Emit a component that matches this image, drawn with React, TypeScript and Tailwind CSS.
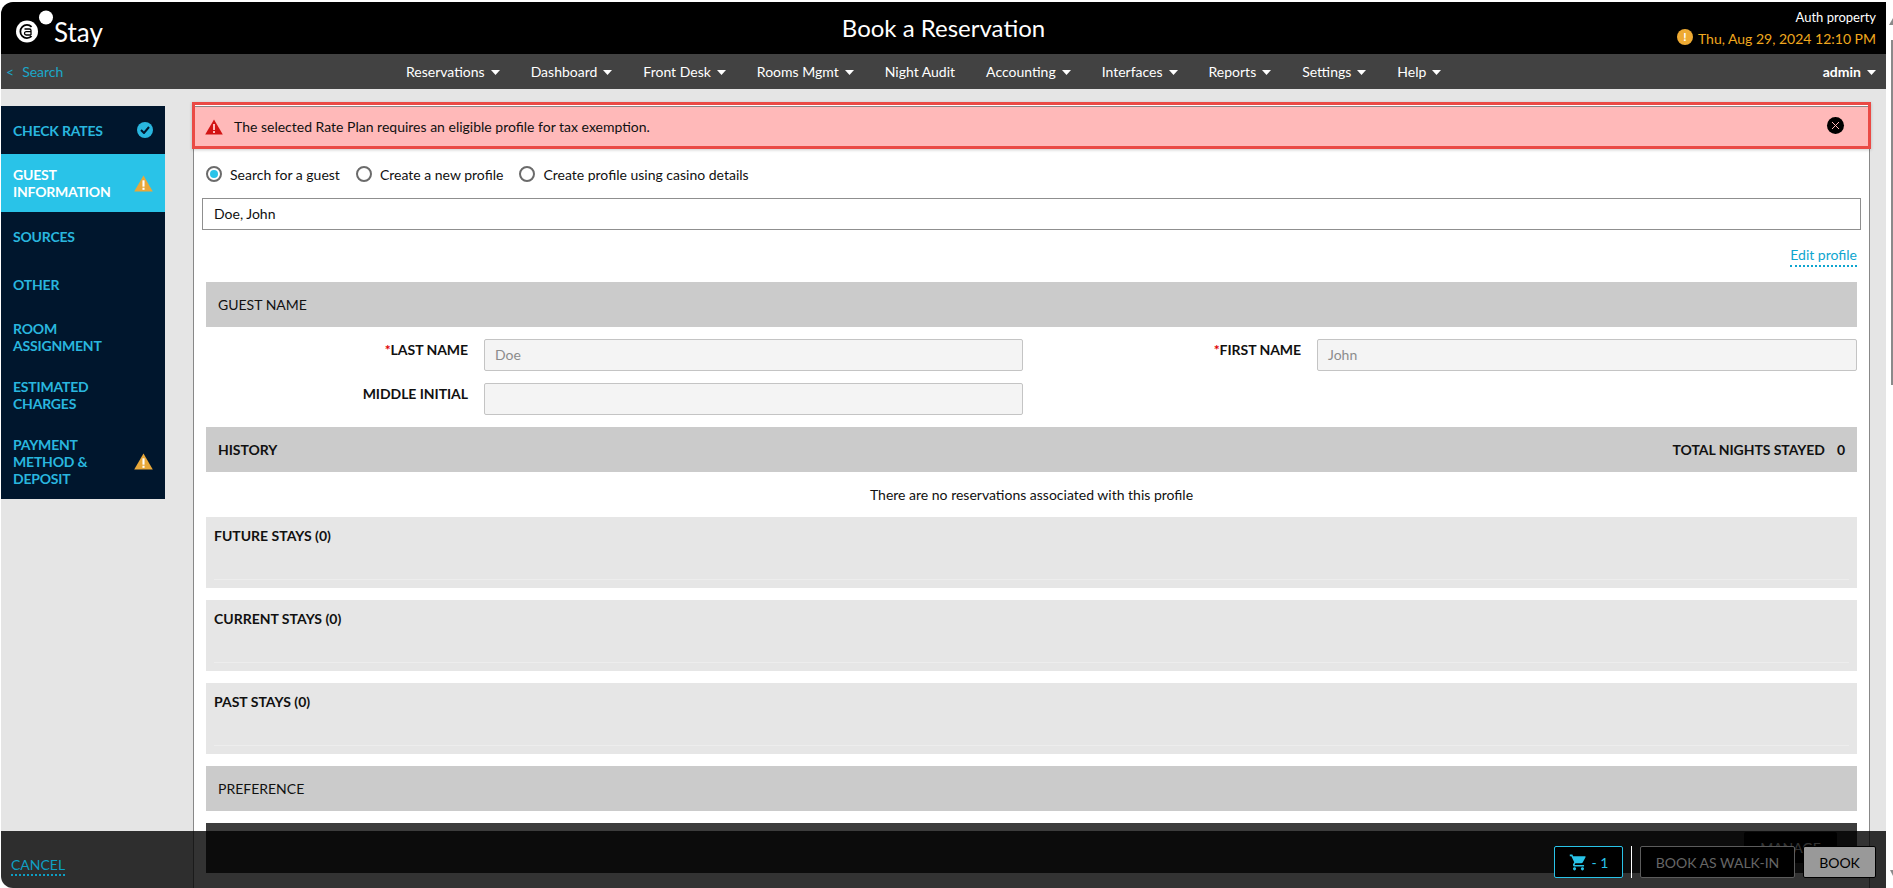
import { MdShoppingCart } from "react-icons/md";

const navItems = [
  { label: "Reservations", caret: true },
  { label: "Dashboard", caret: true },
  { label: "Front Desk", caret: true },
  { label: "Rooms Mgmt", caret: true },
  { label: "Night Audit", caret: false },
  { label: "Accounting", caret: true },
  { label: "Interfaces", caret: true },
  { label: "Reports", caret: true },
  { label: "Settings", caret: true },
  { label: "Help", caret: true },
];

const steps = [
  { lines: ["CHECK RATES"], h: "h-[48px]", status: "done" },
  { lines: ["GUEST", "INFORMATION"], h: "h-[58px]", status: "warn", active: true },
  { lines: ["SOURCES"], h: "h-[48px]" },
  { lines: ["OTHER"], h: "h-[48px]" },
  { lines: ["ROOM", "ASSIGNMENT"], h: "h-[58px]" },
  { lines: ["ESTIMATED", "CHARGES"], h: "h-[58px]" },
  { lines: ["PAYMENT", "METHOD &", "DEPOSIT"], h: "h-[75px]", status: "warn" },
];

function Caret() {
  return (
    <svg width="9" height="5" viewBox="0 0 9 5" className="mt-[2px]">
      <path d="M0 0h9L4.5 5z" fill="currentColor" />
    </svg>
  );
}

function Logo() {
  return (
    <svg width="40" height="40" viewBox="0 0 40 40" className="shrink-0">
      <circle cx="11" cy="25.5" r="11" fill="#fff" />
      <circle cx="30" cy="11.5" r="7" fill="#fff" />
      <path d="M15.6 20.8a6.6 6.6 0 1 0 0 9.4" fill="none" stroke="#000" strokeWidth="1.8" />
      <path
        d="M8.5 23h5a1.5 1.5 0 0 1 1.5 1.5V29M15 25.6h-4.8a1.7 1.7 0 0 0 0 3.4H15"
        fill="none"
        stroke="#000"
        strokeWidth="1.3"
      />
    </svg>
  );
}

function WarnIcon({ color, bang, w = 18, h = 16 }: { color: string; bang: string; w?: number; h?: number }) {
  return (
    <svg width={w} height={h} viewBox="0 0 18 16" className="shrink-0">
      <path d="M9 .5 17.8 15.5H.2z" fill={color} />
      <rect x="8" y="5" width="2" height="6" fill={bang} />
      <rect x="8" y="12" width="2" height="2" fill={bang} />
    </svg>
  );
}

function Radio({ label, checked }: { label: string; checked?: boolean }) {
  return (
    <div className="flex items-center gap-[8px]">
      <div className="flex h-[16px] w-[16px] items-center justify-center rounded-full border-2 border-[#6b6b6b] bg-white">
        {checked && <div className="h-[8px] w-[8px] rounded-full bg-[#29c3e8]" />}
      </div>
      <span>{label}</span>
    </div>
  );
}

function SectionBar({ children, className = "" }: { children: React.ReactNode; className?: string }) {
  return (
    <div className={`mx-[12px] flex h-[45px] items-center justify-between bg-[#cbcbcb] px-[12px] ${className}`}>
      {children}
    </div>
  );
}

function StayBox({ label }: { label: string }) {
  return (
    <div className="mx-[12px] mb-[12px] flex h-[71px] flex-col bg-[#e6e6e6] px-[8px] pt-[9px]">
      <div className="h-[20px] font-bold leading-[20px] text-[#111]">{label}</div>
      <div className="mt-auto mb-[8px] h-px bg-[#ededed]" />
    </div>
  );
}

function Field({ value }: { value: string }) {
  return (
    <div className="flex h-[32px] items-center rounded-[2px] border border-[#c4c4c4] bg-[#f4f4f4] px-[10px] pb-[2px] text-[#8c8c8c]">
      {value}
    </div>
  );
}

export default function App() {
  return (
    <div className="flex h-[888px] w-[1893px] overflow-hidden bg-white font-['Lato',sans-serif] text-[14px] text-[#111]">
      <div className="relative ml-px mt-[2px] flex w-[1885px] flex-col overflow-hidden rounded-tl-[12px] rounded-bl-[12px] bg-[#e5e5e5]">
        <header className="grid h-[52px] shrink-0 grid-cols-[1fr_auto_1fr] items-center bg-black text-white">
          <div className="flex items-start self-start pl-[15px] pt-[4px]">
            <Logo />
            <span className="ml-[-2px] mt-[10px] text-[26px] font-normal leading-[32px]">Stay</span>
          </div>
          <div className="text-[24px] leading-[30px]">Book a Reservation</div>
          <div className="flex flex-col items-end pr-[10px]">
            <div className="text-[13px] leading-[18px]">Auth property</div>
            <div className="mt-[3px] flex items-center gap-[5px] text-[14px] leading-[20px] text-[#f0a81e]">
              <div className="mb-[4px] flex h-[16px] w-[16px] items-center justify-center rounded-full bg-[#eeaa33] text-[12px] font-bold leading-none text-white">
                !
              </div>
              Thu, Aug 29, 2024 12:10 PM
            </div>
          </div>
        </header>

        <nav className="relative flex h-[35px] shrink-0 items-center bg-[#424242] text-[14px] text-white">
          <div className="absolute left-[5px] flex gap-[8px] text-[#1ba8c9]">
            <span>&lt;</span>
            <span>Search</span>
          </div>
          <div className="ml-[405px] flex items-center gap-[31px]">
            {navItems.map((n) => (
              <div key={n.label} className="flex items-center gap-[6px]">
                <span>{n.label}</span>
                {n.caret && <Caret />}
              </div>
            ))}
          </div>
          <div className="ml-auto flex items-center gap-[6px] pr-[10px] font-bold">
            <span>admin</span>
            <Caret />
          </div>
        </nav>

        <div className="flex min-h-0 flex-1 pt-[17px]">
          <aside className="h-[393px] w-[164px] shrink-0 bg-[#00162d]">
            {steps.map((s) => (
              <div
                key={s.lines[0]}
                className={`flex items-center justify-between pl-[12px] pr-[12px] font-bold leading-[17px] tracking-[-0.2px] ${s.h} ${
                  s.active ? "bg-[#29c3e8] text-white" : "text-[#29b6df]"
                }`}
              >
                <div>
                  {s.lines.map((l) => (
                    <div key={l}>{l}</div>
                  ))}
                </div>
                {s.status === "done" && (
                  <div className="flex h-[16px] w-[16px] items-center justify-center rounded-full bg-[#29b6df]">
                    <svg width="10" height="8" viewBox="0 0 10 8">
                      <path d="M1 4l3 3 5-6" fill="none" stroke="#00162d" strokeWidth="2" />
                    </svg>
                  </div>
                )}
                {s.status === "warn" && <WarnIcon color="#e8a83a" bang="#fff" w={19} h={17} />}
              </div>
            ))}
          </aside>

          <main className="ml-[28px] flex w-[1677px] flex-col border-x border-[#888] bg-white">
            <div className="relative z-10 -mx-[2px] -mt-[4px] flex h-[47px] flex-col border-[3px] border-[#ea4a45] bg-[#ffb9b9] shadow-[0_1px_3px_rgba(0,0,0,0.2)]">
              <div className="h-px shrink-0 bg-white" />
              <div className="h-px shrink-0 bg-[#888]" />
              <div className="flex flex-1 items-center pl-[10px] pr-[24px]">
                <WarnIcon color="#d21414" bang="#ffb9b9" />
                <span className="ml-[11px]">The selected Rate Plan requires an eligible profile for tax exemption.</span>
                <div className="ml-auto mb-[3px] flex h-[17px] w-[17px] items-center justify-center rounded-full bg-black">
                  <svg width="9" height="9" viewBox="0 0 9 9">
                    <path d="M1 1l7 7M8 1 1 8" stroke="#ffb9b9" strokeWidth="1" />
                  </svg>
                </div>
              </div>
            </div>

            <div className="mt-[15px] ml-[12px] flex h-[20px] items-center gap-[16px]">
              <Radio label="Search for a guest" checked />
              <Radio label="Create a new profile" />
              <Radio label="Create profile using casino details" />
            </div>

            <div className="mx-[8px] mt-[14px] flex h-[32px] shrink-0 items-center border border-[#8f8f8f] bg-white px-[11px] pb-[2px]">
              Doe, John
            </div>

            <div className="mr-[12px] mt-[15px] flex h-[22px] justify-end">
              <span className="border-b-2 border-dotted border-[#0ea5cf] leading-[20px] text-[#0ea5cf]">Edit profile</span>
            </div>

            <SectionBar className="mt-[15px]">
              <span>GUEST NAME</span>
            </SectionBar>

            <div className="mx-[12px] mt-[12px] grid grid-cols-[262px_539px_262px_540px] gap-x-[16px] gap-y-[12px]">
              <div className="pt-[1px] text-right font-bold leading-[20px] tracking-[-0.05px]">
                <span className="text-[#e00000]">*</span>LAST NAME
              </div>
              <Field value="Doe" />
              <div className="pt-[1px] text-right font-bold leading-[20px] tracking-[-0.05px]">
                <span className="text-[#e00000]">*</span>FIRST NAME
              </div>
              <Field value="John" />
              <div className="pt-[1px] text-right font-bold leading-[20px] tracking-[-0.05px]">MIDDLE INITIAL</div>
              <Field value="" />
            </div>

            <SectionBar className="mt-[12px] font-bold tracking-[-0.05px]">
              <span>HISTORY</span>
              <span className="flex gap-[12px]">
                <span>TOTAL NIGHTS STAYED</span>
                <span>0</span>
              </span>
            </SectionBar>

            <div className="flex h-[45px] items-center justify-center">There are no reservations associated with this profile</div>

            <StayBox label="FUTURE STAYS (0)" />
            <StayBox label="CURRENT STAYS (0)" />
            <StayBox label="PAST STAYS (0)" />

            <SectionBar>
              <span>PREFERENCE</span>
            </SectionBar>

            <div className="mx-[12px] mt-[12px] flex h-[50px] shrink-0 justify-end bg-[#3d3d3d] pr-[20px] pt-[9px]">
              <div className="flex h-[31px] w-[93px] items-center justify-center rounded-[2px] bg-black text-white">MANAGE</div>
            </div>
          </main>
        </div>

        <footer className="absolute inset-x-0 bottom-0 flex h-[57px] items-end justify-between bg-black/80 pb-[10px] pl-[10px] pr-[10px]">
          <span className="mb-[2px] border-b-2 border-dotted border-[#0e9fc4] leading-[19px] text-[#0e9fc4]">CANCEL</span>
          <div className="flex h-[32px]">
            <div className="flex w-[69px] items-center justify-center gap-[4px] rounded-[2px] border border-[#29c3e8] bg-black text-[#29c3e8]">
              <MdShoppingCart size={19} />
              <span>- 1</span>
            </div>
            <div className="mx-[8px] w-px bg-white" />
            <div className="flex w-[155px] items-center justify-center rounded-[2px] border border-[#5c5c5c] bg-black text-[#666]">
              BOOK AS WALK-IN
            </div>
            <div className="ml-[8px] flex w-[73px] items-center justify-center rounded-[2px] border border-black bg-[#999] text-black">
              BOOK
            </div>
          </div>
        </footer>
      </div>

      <div className="flex w-[7px] flex-col items-end pt-[18px] text-[#8a8a8a]">
        <svg width="4" height="7" viewBox="0 0 4 7">
          <path d="M4 0v7H0z" fill="currentColor" />
        </svg>
        <div className="mt-[15px] h-[345px] w-[2px] bg-[#8a8a8a]" />
        <svg width="3" height="6" viewBox="0 0 3 6" className="mt-[485px]">
          <path d="M0 0h3v6z" fill="currentColor" />
        </svg>
      </div>
    </div>
  );
}
